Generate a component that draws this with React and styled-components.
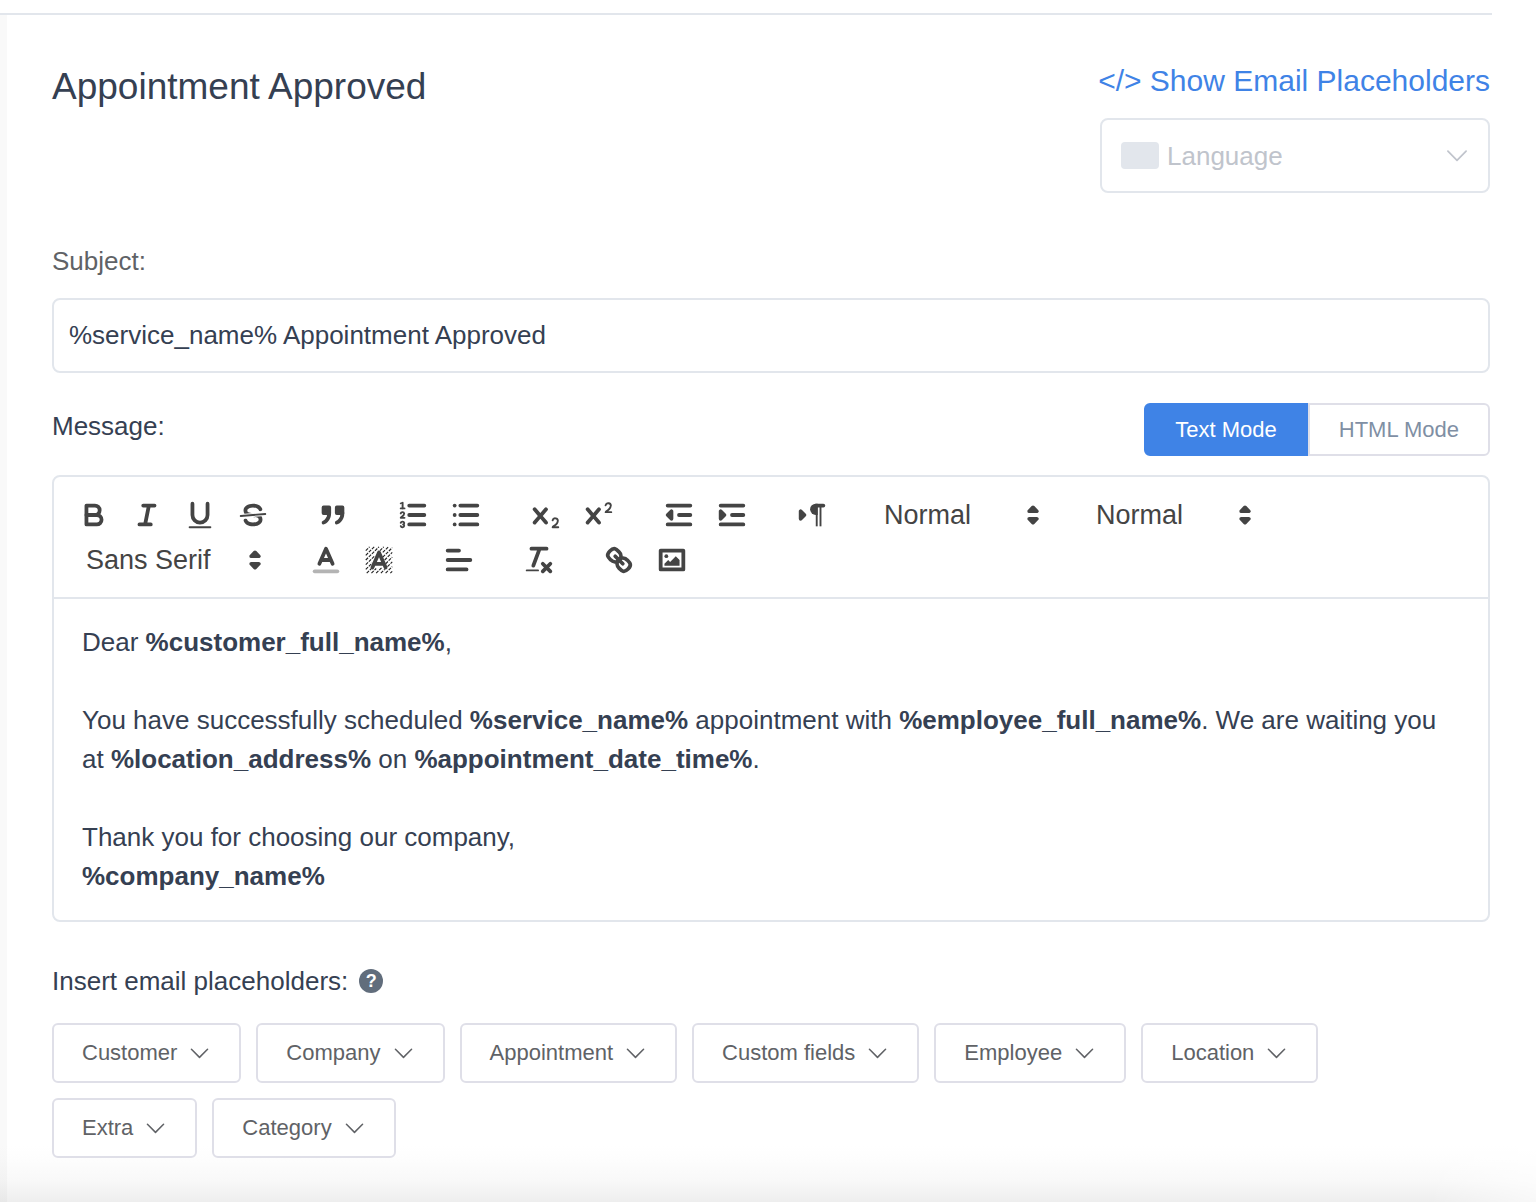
import React, { useState } from 'react';
import styled, { createGlobalStyle } from 'styled-components';

const GlobalStyle = createGlobalStyle`
    * {
        box-sizing : border-box;
    }

    body {
        margin : 0;
        color : #354052;
        background : #fff;
        font-family : "Liberation Sans", Arial, sans-serif;
        font-size : 26px;
    }

    button, input, select {
        margin : 0;
        font-family : inherit;
    }
`;

const Page = styled.div`
    min-height : 100vh;
    display : flex;
    flex-direction : column;
    padding-top : 13px;
`;

const TopLine = styled.hr`
    width : auto;
    height : 2px;
    margin : 0 44px 0 0;
    border : none;
    background : #e2e6ec;
`;

const Main = styled.main`
    flex : 1;
    padding : 46px 46px 44px 45px;
    border-left : 7px solid rgba(0, 0, 0, 0.024);
    background :
        linear-gradient(to right, transparent 93%, rgba(255, 255, 255, 0.6)) bottom / 100% 56px no-repeat,
        linear-gradient(to top, #eeeeee, #f8f8f8 20px, #fdfdfd 42px, #fff 56px) bottom / 100% 56px repeat-x;
`;

const Header = styled.header`
    display : flex;
    justify-content : space-between;
    align-items : flex-start;
    margin-bottom : 48px;
`;

const Title = styled.h1`
    margin : 4px 0 0;
    font-size : 37px;
    font-weight : normal;
    line-height : 44px;
`;

const HeaderSide = styled.div`
    display : flex;
    flex-direction : column;
    align-items : flex-end;
    gap : 17px;
`;

const PlaceholderLink = styled.a`
    color : #3f83e6;
    font-size : 30px;
    line-height : 40px;
    text-decoration : none;
    white-space : nowrap;
`;

const LanguageBox = styled.div`
    display : grid;
    align-items : center;
    width : 390px;
    height : 75px;

    & > * {
        grid-area : 1 / 1;
    }
`;

const LanguageSelect = styled.select`
    width : 100%;
    height : 100%;
    padding : 0 60px 0 65px;
    border : 2px solid #e2e6ec;
    border-radius : 8px;
    background : #fff;
    color : #c0c4cc;
    font-size : 26px;
    appearance : none;
    opacity : 1;
`;

const Flag = styled.span`
    width : 38px;
    height : 27px;
    margin-left : 21px;
    border-radius : 4px;
    background : #e2e6ec;
    pointer-events : none;
`;

const LanguageArrow = styled.span`
    display : flex;
    justify-self : end;
    margin-right : 20px;
    color : #c0c4cc;
    pointer-events : none;
`;

const Label = styled.label`
    display : block;
    color : ${(props) => props.$muted ? '#606266' : '#354052'};
    line-height : 40px;
`;

const SubjectInput = styled.input`
    display : block;
    width : 100%;
    height : 75px;
    margin : 17px 0 30px;
    padding : 0 15px;
    border : 2px solid #e2e6ec;
    border-radius : 8px;
    background : #fff;
    color : #354052;
    font-size : 26px;
`;

const MessageBar = styled.div`
    display : flex;
    justify-content : space-between;
    align-items : flex-start;
    margin-bottom : 19px;
`;

const MessageLabel = styled.span`
    padding-top : 3px;
    line-height : 40px;
`;

const ModeGroup = styled.div`
    display : flex;
`;

const ModeButton = styled.button`
    height : 53px;
    padding : 0 29px;
    border : 2px solid ${(props) => props.$active ? '#3f83e6' : '#dfdfe8'};
    background : ${(props) => props.$active ? '#3f83e6' : '#fff'};
    color : ${(props) => props.$active ? '#fff' : '#7f8fa4'};
    font-size : 22px;
    cursor : pointer;

    &:first-child {
        border-radius : 6px 0 0 6px;
    }

    &:last-child {
        border-radius : 0 6px 6px 0;
    }
`;

const Editor = styled.section`
    margin-bottom : 39px;
    border : 2px solid #e2e6ec;
    border-radius : 8px;
`;

const Toolbar = styled.div`
    display : flex;
    flex-wrap : wrap;
    column-gap : 27px;
    padding : 15px 13px;
    border-bottom : 2px solid #e2e6ec;
    color : #444;
`;

const ToolGroup = styled.div`
    display : flex;
`;

const ToolButton = styled.button`
    display : flex;
    align-items : center;
    justify-content : center;
    width : 53px;
    height : 45px;
    padding : 0;
    border : none;
    background : none;
    color : inherit;
    cursor : pointer;
`;

const ToolIcon = styled.svg`
    width : 34px;
    height : 34px;
    fill : none;
    stroke : currentColor;
    stroke-width : 2;
    stroke-linecap : round;
    stroke-linejoin : round;

    .fill {
        fill : currentColor;
        stroke : none;
    }

    .both {
        fill : currentColor;
    }

    .thin {
        stroke-width : 1;
    }
`;

const Picker = styled.div`
    display : grid;
    align-items : center;
    width : ${(props) => props.$wide ? '205px' : '185px'};
    height : 45px;

    & > * {
        grid-area : 1 / 1;
    }

    svg {
        justify-self : end;
        pointer-events : none;
    }
`;

const PickerSelect = styled.select`
    width : 100%;
    height : 100%;
    padding : 0 34px 0 19px;
    border : none;
    background : none;
    color : inherit;
    font-size : 27px;
    font-weight : 500;
    appearance : none;
`;

const Content = styled.div`
    padding : 24px 28px;
    line-height : 39px;
    outline : none;

    p {
        min-height : 39px;
        margin : 0;
    }
`;

const InsertRow = styled.div`
    display : flex;
    align-items : center;
    gap : 11px;
    margin-bottom : 22px;
    line-height : 40px;
`;

const HelpButton = styled.button`
    width : 24px;
    height : 24px;
    padding : 0;
    border : none;
    border-radius : 50%;
    background : #616d7c;
    color : #fff;
    font-size : 18px;
    font-weight : bold;
    line-height : 24px;
`;

const PlaceholderList = styled.div`
    display : flex;
    flex-wrap : wrap;
    gap : 15px;
    max-width : 1300px;
`;

const PlaceholderButton = styled.button`
    display : flex;
    align-items : center;
    gap : 11px;
    height : 60px;
    padding : 0 28px;
    border : 2px solid #dfdfe8;
    border-radius : 6px;
    background : #fff;
    color : #606266;
    font-size : 22px;
    cursor : pointer;
`;

const Chevron = ({ size }) => (
    <svg width={size} height={size} viewBox="0 0 24 24" fill="none" stroke="currentColor" strokeWidth="1.6" strokeLinecap="round" strokeLinejoin="round">
        <path d="M3.6 7.6 L12 16 L20.4 7.6"/>
    </svg>
);

const crossPath = "M9.65,5.241a1,1,0,0,0-1.409.108L6,7.964,3.759,5.349A1,1,0,0,0,2.192,6.592Q2.215,6.621,2.241,6.649L4.684,9.5,2.241,12.35A1,1,0,0,0,3.71,13.707q0.026-.028.049-0.057L6,11.036,8.241,13.65a1,1,0,1,0,1.567-1.243Q9.785,12.378,9.759,12.35L7.316,9.5,9.759,6.651A1,1,0,0,0,9.65,5.241Z";

const icons = {
    bold : <>
        <path d="M5,4H9.5A2.5,2.5,0,0,1,12,6.5v0A2.5,2.5,0,0,1,9.5,9H5V4Z"/>
        <path d="M5,9h5.5A2.5,2.5,0,0,1,13,11.5v0A2.5,2.5,0,0,1,10.5,14H5V9Z"/>
    </>,
    italic : <path d="M7,4H13M5,14H11M8,14L10,4"/>,
    underline : <>
        <path d="M5,3V9a4.012,4.012,0,0,0,4,4H9a4.012,4.012,0,0,0,4-4V3"/>
        <rect className="fill" x="3" y="15" width="12" height="1" rx="0.5"/>
    </>,
    strike : <>
        <path className="thin" d="M15.5,8.5L2.5,9.5"/>
        <path className="fill" d="M9.007,8C6.542,7.791,6,7.519,6,6.5,6,5.792,7.283,5,9,5c1.571,0,2.765.679,2.969,1.309a1,1,0,0,0,1.9-.617C13.356,4.106,11.354,3,9,3,6.2,3,4,4.538,4,6.5a3.2,3.2,0,0,0,.5,1.843Z"/>
        <path className="fill" d="M8.984,10C11.457,10.208,12,10.479,12,11.5c0,0.708-1.283,1.5-3,1.5-1.571,0-2.765-.679-2.969-1.309a1,1,0,1,0-1.9.617C4.644,13.894,6.646,15,9,15c2.8,0,5-1.538,5-3.5a3.2,3.2,0,0,0-.5-1.843Z"/>
    </>,
    quote : <>
        <rect className="both" x="4" y="5" width="3" height="3"/>
        <rect className="both" x="11" y="5" width="3" height="3"/>
        <path className="both" d="M7,8c0,4.031-3,5-3,5"/>
        <path className="both" d="M14,8c0,4.031-3,5-3,5"/>
    </>,
    ordered : <>
        <path d="M7,4H15M7,9H15M7,14H15"/>
        <path className="thin" d="M2.5,5.5H4.5"/>
        <path className="fill" d="M3.5,6A0.5,0.5,0,0,1,3,5.5V3.085l-0.276.138A0.5,0.5,0,0,1,2.053,3c-0.124-.247-0.023-0.324.224-0.447l1-.5A0.5,0.5,0,0,1,4,2.5v3A0.5,0.5,0,0,1,3.5,6Z"/>
        <path className="thin" d="M4.5,10.5h-2c0-.234,1.85-1.076,1.85-2.234A0.959,0.959,0,0,0,2.5,8.156"/>
        <path className="thin" d="M2.5,14.846a0.959,0.959,0,0,0,1.85-.109A0.7,0.7,0,0,0,3.75,14a0.688,0.688,0,0,0,.6-0.736,0.959,0.959,0,0,0-1.85-.109"/>
    </>,
    bullet : <>
        <path d="M6,4H15M6,9H15M6,14H15"/>
        <circle className="fill" cx="3" cy="4" r="1"/>
        <circle className="fill" cx="3" cy="9" r="1"/>
        <circle className="fill" cx="3" cy="14" r="1"/>
    </>,
    sub : <>
        <path className="fill" d="M15.5,15H13.861a3.858,3.858,0,0,0,1.914-2.975,1.8,1.8,0,0,0-1.6-1.751A1.921,1.921,0,0,0,12.021,11.7a0.5,0.5,0,1,0,.957.291h0a0.914,0.914,0,0,1,1.053-.725,0.81,0.81,0,0,1,.744.762c0,1.076-1.17,1.87-1.94,2.431A1.456,1.456,0,0,0,12,15.5a0.5,0.5,0,0,0,.5.5h3A0.5,0.5,0,0,0,15.5,15Z"/>
        <path className="fill" d={crossPath}/>
    </>,
    sup : <>
        <path className="fill" d="M15.5,7H13.861a4.015,4.015,0,0,0,1.914-2.975,1.8,1.8,0,0,0-1.6-1.751A1.922,1.922,0,0,0,12.021,3.7a0.5,0.5,0,1,0,.957.291,0.917,0.917,0,0,1,1.053-.725,0.81,0.81,0,0,1,.744.762c0,1.077-1.164,1.925-1.934,2.486A1.423,1.423,0,0,0,12,7.5a0.5,0.5,0,0,0,.5.5h3A0.5,0.5,0,0,0,15.5,7Z"/>
        <path className="fill" d={crossPath}/>
    </>,
    outdent : <>
        <path d="M3,14H15M3,4H15M9,9H15"/>
        <path className="both" d="M5,7V11L3,9Z"/>
    </>,
    indent : <>
        <path d="M3,14H15M3,4H15M9,9H15"/>
        <path className="both" d="M3,7V11L5,9Z"/>
    </>,
    direction : <>
        <path className="both" d="M3,11L5,9L3,7Z"/>
        <path d="M15,4H11"/>
        <path className="fill" d="M11,3a3,3,0,0,0,0,6h1V3H11Z"/>
        <rect className="fill" x="11" y="4" width="1" height="11"/>
        <rect className="fill" x="13" y="4" width="1" height="11"/>
    </>,
    color : <>
        <path d="M3,15H15" opacity="0.4"/>
        <path d="M5.5,11L9,3L12.5,11M11.63,9H6.38"/>
    </>,
    background : <>
        <path stroke="#222" strokeWidth="0.6" strokeDasharray="1.7 0.6" strokeLinecap="butt" d="M2,4L4,2M2,6.5L6.5,2M2,9L9,2M2,11.5L6.5,7M2,14L5.5,10.5M2.5,16L5.5,13M5,16L7.5,13.5M7.5,16L10.5,13M10,16L12,14M12.5,16L16,12.5M15,16L16,15M9.5,4L11.5,2M11,5L14,2M11,7.5L16,2.5M12,9L16,5M12.5,11L16,7.5M13.5,12.5L16,10"/>
        <path d="M5.5,13L9,5L12.5,13M11.63,11H6.38"/>
    </>,
    align : <path d="M3,9H15M3,14H13M3,4H9"/>,
    clean : <>
        <path d="M5,3H13M6,12L9.35,3M11,11L15,15M15,11L11,15"/>
        <rect className="fill" x="2" y="14" width="7" height="1" rx="0.5"/>
    </>,
    link : <>
        <path d="M7,7L11,11"/>
        <path d="M8.9,4.577a3.476,3.476,0,0,1,.36,4.679A3.476,3.476,0,0,1,4.577,8.9C3.185,7.5,2.035,6.4,4.217,4.217S7.5,3.185,8.9,4.577Z"/>
        <path d="M13.423,9.1a3.476,3.476,0,0,0-4.679-.36,3.476,3.476,0,0,0,.36,4.679c1.392,1.392,2.5,2.542,4.679.36S14.815,10.5,13.423,9.1Z"/>
    </>,
    image : <>
        <rect x="3" y="4" width="12" height="10"/>
        <circle className="fill" cx="6" cy="7" r="1"/>
        <path className="fill" d="M5,12V11L7,9L8,10L11,7L13,9V12Z"/>
    </>,
    updown : <path className="both" d="M7,11L9,13L11,11ZM7,7L9,5L11,7Z"/>,
};

const Icon = ({ name }) => <ToolIcon viewBox="0 0 18 18" aria-hidden="true">{icons[name]}</ToolIcon>;

const Tools = ({ names }) => (
    <ToolGroup>
        {names.map((name) => (
            <ToolButton key={name} type="button" aria-label={name}>
                <Icon name={name}/>
            </ToolButton>
        ))}
    </ToolGroup>
);

const ToolPicker = ({ label, options, wide }) => (
    <Picker $wide={wide}>
        <PickerSelect aria-label={label}>
            {options.map((option) => <option key={option}>{option}</option>)}
        </PickerSelect>
        <Icon name="updown"/>
    </Picker>
);

const placeholders = ['Customer', 'Company', 'Appointment', 'Custom fields', 'Employee', 'Location', 'Extra', 'Category'];

function App() {

    const [ subject, setSubject ] = useState('%service_name% Appointment Approved');
    const [ mode, setMode ] = useState('Text Mode');

    return (
        <Page>
            <GlobalStyle/>
            <TopLine/>
            <Main>
                <Header>
                    <Title>Appointment Approved</Title>
                    <HeaderSide>
                        <PlaceholderLink href="#placeholders">&lt;/&gt; Show Email Placeholders</PlaceholderLink>
                        <LanguageBox>
                            <LanguageSelect aria-label="Language" disabled>
                                <option>Language</option>
                            </LanguageSelect>
                            <Flag/>
                            <LanguageArrow><Chevron size={26}/></LanguageArrow>
                        </LanguageBox>
                    </HeaderSide>
                </Header>

                <Label htmlFor="subject" $muted>Subject:</Label>
                <SubjectInput id="subject" value={subject} onChange={(e) => setSubject(e.target.value)}/>

                <MessageBar>
                    <MessageLabel id="message-label">Message:</MessageLabel>
                    <ModeGroup>
                        {['Text Mode', 'HTML Mode'].map((name) => (
                            <ModeButton key={name} type="button" $active={mode === name} onClick={() => setMode(name)}>
                                {name}
                            </ModeButton>
                        ))}
                    </ModeGroup>
                </MessageBar>

                <Editor>
                    <Toolbar>
                        <Tools names={['bold', 'italic', 'underline', 'strike']}/>
                        <Tools names={['quote']}/>
                        <Tools names={['ordered', 'bullet']}/>
                        <Tools names={['sub', 'sup']}/>
                        <Tools names={['outdent', 'indent']}/>
                        <Tools names={['direction']}/>
                        <ToolPicker label="Size" options={['Normal', 'Small', 'Large', 'Huge']}/>
                        <ToolPicker label="Heading" options={['Normal', 'Heading 1', 'Heading 2']}/>
                        <ToolPicker label="Font" options={['Sans Serif', 'Serif', 'Monospace']} wide/>
                        <Tools names={['color', 'background']}/>
                        <Tools names={['align']}/>
                        <Tools names={['clean']}/>
                        <Tools names={['link', 'image']}/>
                    </Toolbar>
                    <Content role="textbox" aria-multiline="true" aria-labelledby="message-label" contentEditable suppressContentEditableWarning spellCheck={false}>
                        <p>Dear <strong>%customer_full_name%</strong>,</p>
                        <p><br/></p>
                        <p>
                            You have successfully scheduled <strong>%service_name%</strong> appointment with <strong>%employee_full_name%</strong>. We are waiting you {'at '}
                            <strong>%location_address%</strong> on <strong>%appointment_date_time%</strong>.
                        </p>
                        <p><br/></p>
                        <p>Thank you for choosing our company,</p>
                        <p><strong>%company_name%</strong></p>
                    </Content>
                </Editor>

                <InsertRow>
                    <span>Insert email placeholders:</span>
                    <HelpButton type="button" aria-label="Help">?</HelpButton>
                </InsertRow>
                <PlaceholderList id="placeholders">
                    {placeholders.map((name) => (
                        <PlaceholderButton key={name} type="button">
                            {name}
                            <Chevron size={23}/>
                        </PlaceholderButton>
                    ))}
                </PlaceholderList>
            </Main>
        </Page>
    );
}

export default App;
